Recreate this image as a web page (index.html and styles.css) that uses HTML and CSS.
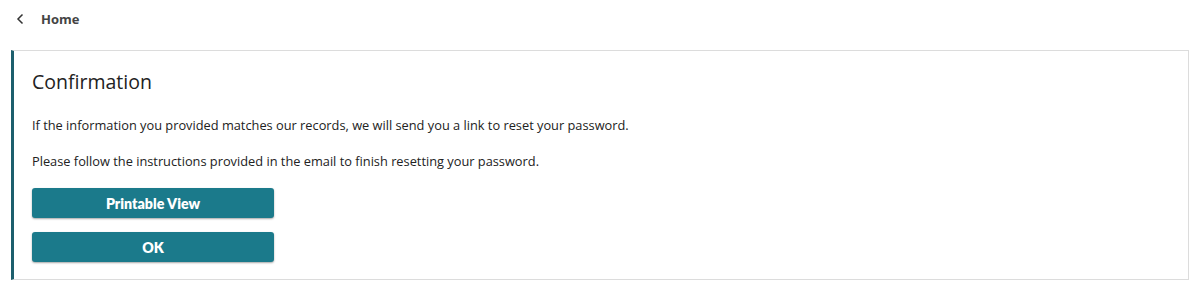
FILE: index.html
```html
<!DOCTYPE html>
<html>
<head>
<meta charset="utf-8">
<link rel="stylesheet" href="styles.css">
</head>
<body>
<nav class="crumb">
  <svg class="chev" width="8" height="12" viewBox="0 0 8 12"><path d="M6.5 1.5 L2 6 L6.5 10.5" fill="none" stroke="#333" stroke-width="1.5"/></svg>
  <span class="home">Home</span>
</nav>
<section class="card">
  <h1 class="title">Confirmation</h1>
  <p class="msg">If the information you provided matches our records, we will send you a link to reset your password.</p>
  <p class="msg">Please follow the instructions provided in the email to finish resetting your password.</p>
  <div class="actions">
    <button class="btn">Printable View</button>
    <button class="btn">OK</button>
  </div>
</section>
</body>
</html>
```
FILE: styles.css
```css
html, body {
  margin: 0;
  padding: 0;
  background: #ffffff;
}
body {
  font-family: "Open Sans", "Noto Sans", sans-serif;
  color: #222;
}
.crumb {
  display: flex;
  align-items: center;
  height: 38px;
  padding-left: 16px;
  gap: 17px;
}
.chev {
  display: block;
}
.home {
  font-size: 13px;
  font-weight: 700;
  color: #444;
}
.card {
  margin: 12px 11px 0 11px;
  border: 1px solid #dcdcdc;
  border-left: 3px solid #1d5f6d;
  padding: 18px 18px 16px 18px;
  height: 230px;
  box-sizing: border-box;
}
.title {
  margin: 0 0 21px 0;
  font-size: 19.5px;
  font-weight: 400;
  color: #222;
  line-height: 26px;
}
.msg {
  margin: 0 0 18px 0;
  font-size: 12.8px;
  line-height: 18px;
  color: #222;
}
.actions {
  display: flex;
  flex-direction: column;
  gap: 14px;
  margin-top: 12px;
}
.btn {
  width: 242px;
  height: 30px;
  background: #1b7a8b;
  color: #fff;
  border: none;
  border-radius: 3px;
  box-shadow: 0 1px 2px rgba(0,0,0,0.35);
  font-family: "Lato", sans-serif;
  font-weight: 800;
  font-size: 14.2px;
  cursor: pointer;
}
```
